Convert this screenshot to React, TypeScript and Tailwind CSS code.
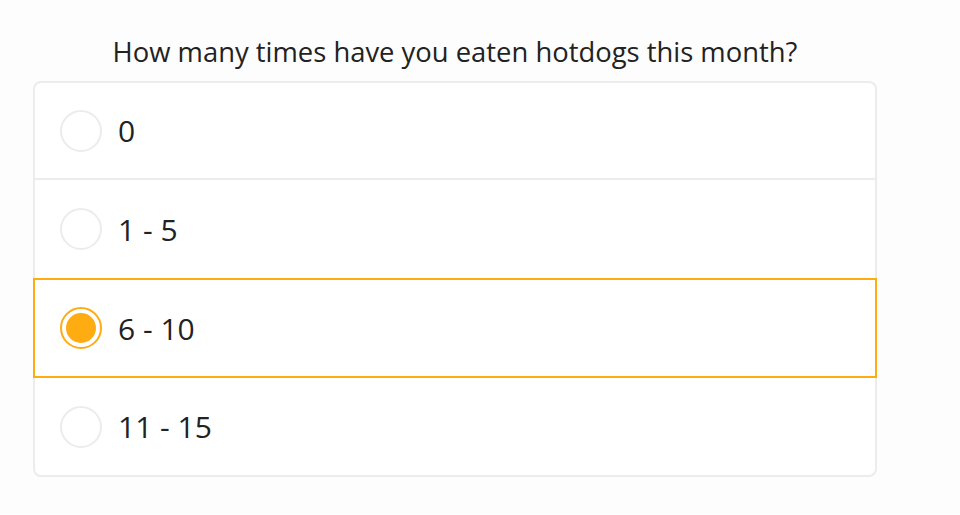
import React from "react";

const options = [
  { label: "0", h: "h-[97px] border-b-2 border-[#ececec]" },
  { label: "1 - 5", h: "h-[98px]" },
  { label: "6 - 10", h: "h-[100px] border-2 border-[#ffab12] -mx-[2px]" },
  { label: "11 - 15", h: "h-[97px]" },
];

export default function App() {
  const selected = 2;
  return (
    <div className="w-[960px] h-[515px] bg-[#fdfdfd] overflow-hidden" style={{ fontFamily: '"Open Sans", sans-serif' }}>
      <div className="ml-[33px] w-[844px] pt-[33px]">
        <div className="text-center text-[27.4px] leading-[38px] text-[#222] mb-[10px]">
          How many times have you eaten hotdogs this month?
        </div>
        <div className="rounded-[8px] border-2 border-[#ececec] bg-white">
          {options.map((o, i) => {
            const sel = i === selected;
            return (
              <div key={o.label} className={"flex items-center pl-[25px] gap-[16px] " + o.h}>
                {sel ? (
                  <div className="w-[42px] h-[42px] rounded-full border-2 border-[#ffab12] flex items-center justify-center">
                    <div className="w-[30px] h-[30px] rounded-full bg-[#ffab12]" />
                  </div>
                ) : (
                  <div className="w-[42px] h-[42px] rounded-full border-2 border-[#ececec]" />
                )}
                <span className="text-[30px] text-[#222]">{o.label}</span>
              </div>
            );
          })}
        </div>
      </div>
    </div>
  );
}
